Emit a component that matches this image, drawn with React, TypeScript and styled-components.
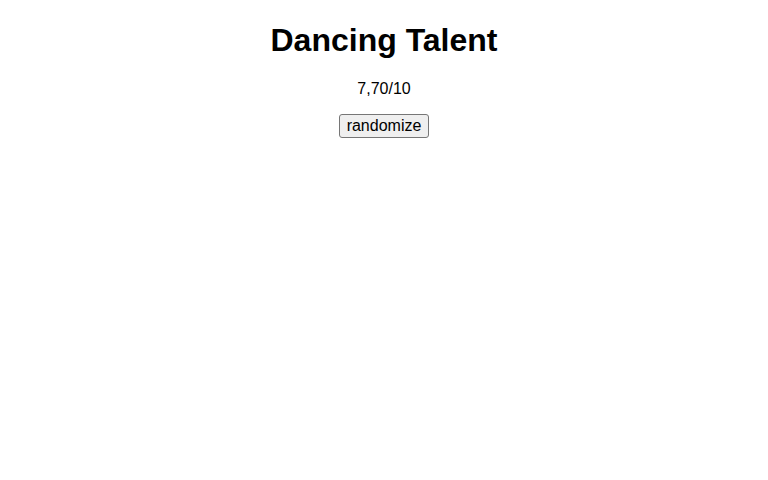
import React, { useState } from 'react'
import styled, { createGlobalStyle } from 'styled-components'

const GlobalStyle = createGlobalStyle`
  body {
    margin: 0;
    font-family: "Liberation Sans", Arial, sans-serif;
    background: #fff;
    color: #000;
  }
`

const Page = styled.div`
  text-align: center;
  padding-top: 0.1px;
`

const Title = styled.h1`
  font-size: 32px;
  font-weight: bold;
  margin: 21.44px 0;
`

const Score = styled.p`
  font-size: 16px;
  margin: 16px 0;
`

const RandomButton = styled.button`
  font-family: "Liberation Sans", Arial, sans-serif;
  font-size: 16px;
  color: #000;
  background: #efefef;
  border: 1px solid #767676;
  border-radius: 3px;
  padding: 2px 7px;
  line-height: normal;
  cursor: pointer;
`

export default function App() {
  const [score, setScore] = useState(7.7)
  return (
    <Page>
      <GlobalStyle />
      <Title>Dancing Talent</Title>
      <Score>{score.toFixed(2).replace('.', ',')}/10</Score>
      <RandomButton onClick={() => setScore(Math.random() * 10)}>randomize</RandomButton>
    </Page>
  )
}
